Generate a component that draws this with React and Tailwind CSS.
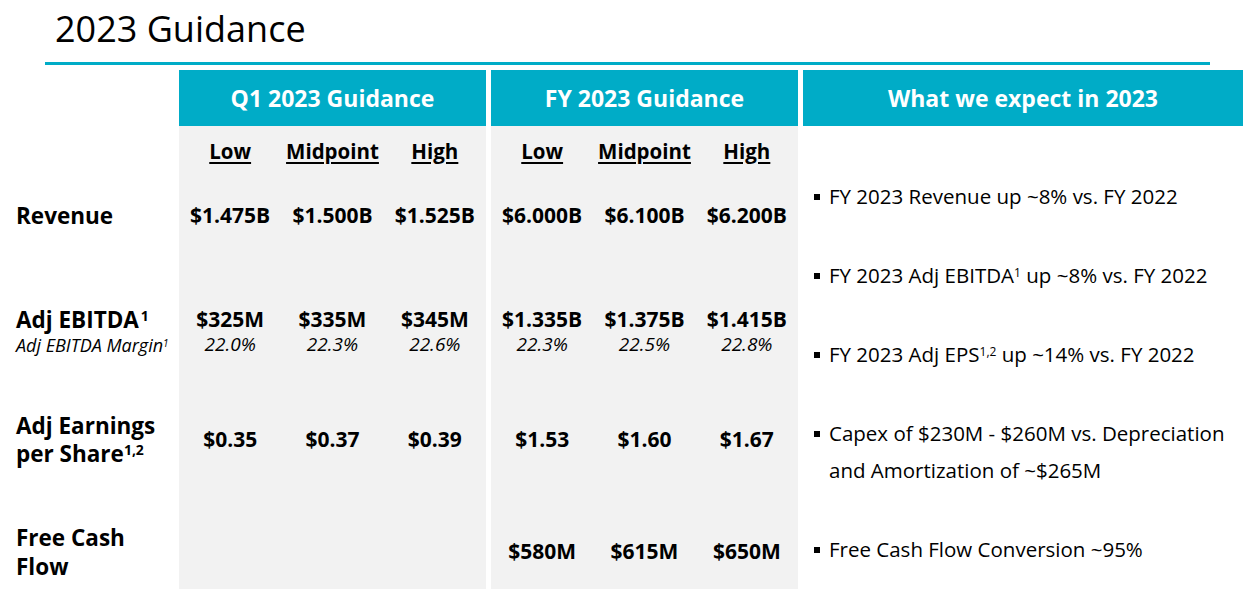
const q1 = {
  revenue: ["$1.475B", "$1.500B", "$1.525B"],
  ebitda: ["$325M", "$335M", "$345M"],
  margin: ["22.0%", "22.3%", "22.6%"],
  eps: ["$0.35", "$0.37", "$0.39"],
  fcf: null,
};

const fy = {
  revenue: ["$6.000B", "$6.100B", "$6.200B"],
  ebitda: ["$1.335B", "$1.375B", "$1.415B"],
  margin: ["22.3%", "22.5%", "22.8%"],
  eps: ["$1.53", "$1.60", "$1.67"],
  fcf: ["$580M", "$615M", "$650M"],
};

function Trio({ values, className = "" }) {
  return (
    <div className="grid grid-cols-3">
      {values.map((v, i) => (
        <div key={i} className={"text-center " + className}>
          {v}
        </div>
      ))}
    </div>
  );
}

function GuidancePanel({ title, data }) {
  return (
    <div className="flex w-[307px] shrink-0 flex-col">
      <div className="flex h-[56px] shrink-0 items-center justify-center bg-[#00acc7] text-[23px] font-bold text-white">
        {title}
      </div>
      <div className="flex flex-1 flex-col bg-[#f2f2f2]">
        <div className="flex h-[50px] shrink-0 items-center">
          <div className="w-full">
            <Trio
              values={["Low", "Midpoint", "High"]}
              className="text-[20.5px] font-bold underline decoration-[2px] underline-offset-[3px]"
            />
          </div>
        </div>
        <div className="flex h-[80px] shrink-0 items-center">
          <div className="w-full">
            <Trio values={data.revenue} className="text-[21px] font-bold" />
          </div>
        </div>
        <div className="flex h-[148px] shrink-0 items-center">
          <div className="w-full">
            <Trio values={data.ebitda} className="text-[21px] font-bold leading-[27px]" />
            <Trio values={data.margin} className="text-[19px] italic leading-[22px]" />
          </div>
        </div>
        <div className="flex h-[72px] shrink-0 items-center">
          <div className="w-full">
            <Trio values={data.eps} className="text-[21px] font-bold" />
          </div>
        </div>
        <div className="flex h-[113px] shrink-0 items-start pt-[61px]">
          <div className="w-full">
            {data.fcf && <Trio values={data.fcf} className="text-[21px] font-bold leading-[28px]" />}
          </div>
        </div>
      </div>
    </div>
  );
}

function Bullet({ children }) {
  return (
    <div className="flex items-start leading-[37px]">
      <span className="mt-[16px] mr-[9px] ml-[11px] h-[6px] w-[6px] shrink-0 bg-black" />
      <span>{children}</span>
    </div>
  );
}

export default function App() {
  return (
    <div
      className="h-[589px] w-[1243px] overflow-hidden bg-white text-black"
      style={{ fontFamily: '"Open Sans", "Noto Sans", sans-serif' }}
    >
      <div className="pl-[55px] pt-[4px] text-[36px] leading-[50px]">2023 Guidance</div>
      <div className="ml-[45px] mt-[8px] h-[3px] w-[1165px] bg-[#00acc7]" />

      <div className="mt-[5px] flex h-[519px]">
        {/* row labels */}
        <div className="flex w-[179px] shrink-0 flex-col pl-[16px]">
          <div className="h-[106px] shrink-0" />
          <div className="flex h-[80px] shrink-0 items-center text-[22.5px] font-bold">Revenue</div>
          <div className="flex h-[148px] shrink-0 flex-col justify-center">
            <div className="text-[22.5px] font-bold leading-[30px]">
              Adj EBITDA<sup className="ml-[2px] text-[14px]">1</sup>
            </div>
            <div className="whitespace-nowrap text-[18px] italic leading-[21px]">
              Adj EBITDA Margin<sup className="text-[10px]">1</sup>
            </div>
          </div>
          <div className="flex h-[72px] shrink-0 flex-col justify-center text-[22.5px] font-bold leading-[28px]">
            <div>Adj Earnings</div>
            <div>
              per Share<sup className="text-[14px]">1,2</sup>
            </div>
          </div>
          <div className="flex shrink-0 flex-col pt-[47px] text-[22.5px] font-bold leading-[29px]">
            <div>Free Cash</div>
            <div>Flow</div>
          </div>
        </div>

        <GuidancePanel title="Q1 2023 Guidance" data={q1} />
        <div className="w-[5px] shrink-0" />
        <GuidancePanel title="FY 2023 Guidance" data={fy} />
        <div className="w-[5px] shrink-0" />

        {/* right column */}
        <div className="flex flex-1 flex-col">
          <div className="flex h-[56px] shrink-0 items-center justify-center bg-[#00acc7] text-[23px] font-bold text-white">
            What we expect in 2023
          </div>
          <div className="flex flex-col gap-[42px] pt-[52px] text-[20.5px]">
            <Bullet>FY 2023 Revenue up ~8% vs. FY 2022</Bullet>
            <Bullet>
              FY 2023 Adj EBITDA<sup className="text-[12px]">1</sup> up ~8% vs. FY 2022
            </Bullet>
            <Bullet>
              FY 2023 Adj EPS<sup className="text-[12px]">1,2</sup> up ~14% vs. FY 2022
            </Bullet>
            <Bullet>
              Capex of $230M - $260M vs. Depreciation
              <br />
              and Amortization of ~$265M
            </Bullet>
            <Bullet>Free Cash Flow Conversion ~95%</Bullet>
          </div>
        </div>
      </div>
    </div>
  );
}
